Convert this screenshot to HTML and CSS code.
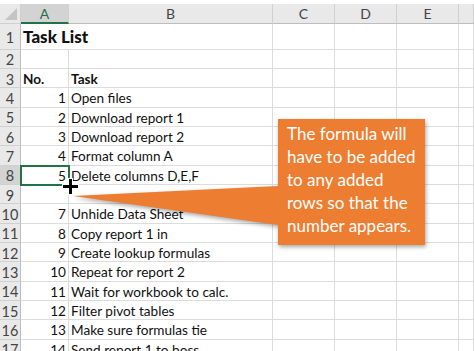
FILE: index.html
```html
<!DOCTYPE html>
<html lang="en">
<head>
    <meta charset="UTF-8">
    <title>Task List</title>
    <link rel="stylesheet" href="styles.css">
</head>
<body>
    <div class="sheet">
        <div class="grid">
            <!-- column headers -->
            <div class="hdr corner"><span class="corner-tri"></span></div>
            <div class="hdr col active">A</div>
            <div class="hdr col">B</div>
            <div class="hdr col">C</div>
            <div class="hdr col">D</div>
            <div class="hdr col">E</div>
            <div class="hdr col"></div>

            <div class="hdr row tall">1</div>
            <div class="cell tall title">Task List</div>
            <div class="cell tall"></div><div class="cell tall"></div><div class="cell tall"></div><div class="cell tall"></div><div class="cell tall"></div>

            <div class="hdr row">2</div>
            <div class="cell"></div><div class="cell"></div><div class="cell"></div><div class="cell"></div><div class="cell"></div><div class="cell"></div>

            <div class="hdr row">3</div>
            <div class="cell bold">No.</div><div class="cell bold">Task</div><div class="cell"></div><div class="cell"></div><div class="cell"></div><div class="cell"></div>

            <div class="hdr row">4</div>
            <div class="cell num">1</div><div class="cell">Open files</div><div class="cell"></div><div class="cell"></div><div class="cell"></div><div class="cell"></div>

            <div class="hdr row">5</div>
            <div class="cell num">2</div><div class="cell">Download report 1</div><div class="cell"></div><div class="cell"></div><div class="cell"></div><div class="cell"></div>

            <div class="hdr row">6</div>
            <div class="cell num">3</div><div class="cell">Download report 2</div><div class="cell"></div><div class="cell"></div><div class="cell"></div><div class="cell"></div>

            <div class="hdr row">7</div>
            <div class="cell num">4</div><div class="cell">Format column A</div><div class="cell"></div><div class="cell"></div><div class="cell"></div><div class="cell"></div>

            <div class="hdr row active">8</div>
            <div class="cell num selected">5</div><div class="cell">Delete columns D,E,F</div><div class="cell"></div><div class="cell"></div><div class="cell"></div><div class="cell"></div>

            <div class="hdr row">9</div>
            <div class="cell"></div><div class="cell"></div><div class="cell"></div><div class="cell"></div><div class="cell"></div><div class="cell"></div>

            <div class="hdr row">10</div>
            <div class="cell num">7</div><div class="cell">Unhide Data Sheet</div><div class="cell"></div><div class="cell"></div><div class="cell"></div><div class="cell"></div>

            <div class="hdr row">11</div>
            <div class="cell num">8</div><div class="cell">Copy report 1 in</div><div class="cell"></div><div class="cell"></div><div class="cell"></div><div class="cell"></div>

            <div class="hdr row">12</div>
            <div class="cell num">9</div><div class="cell">Create lookup formulas</div><div class="cell"></div><div class="cell"></div><div class="cell"></div><div class="cell"></div>

            <div class="hdr row">13</div>
            <div class="cell num">10</div><div class="cell">Repeat for report 2</div><div class="cell"></div><div class="cell"></div><div class="cell"></div><div class="cell"></div>

            <div class="hdr row">14</div>
            <div class="cell num">11</div><div class="cell">Wait for workbook to calc.</div><div class="cell"></div><div class="cell"></div><div class="cell"></div><div class="cell"></div>

            <div class="hdr row">15</div>
            <div class="cell num">12</div><div class="cell">Filter pivot tables</div><div class="cell"></div><div class="cell"></div><div class="cell"></div><div class="cell"></div>

            <div class="hdr row">16</div>
            <div class="cell num">13</div><div class="cell">Make sure formulas tie</div><div class="cell"></div><div class="cell"></div><div class="cell"></div><div class="cell"></div>

            <div class="hdr row">17</div>
            <div class="cell num">14</div><div class="cell">Send report 1 to boss</div><div class="cell"></div><div class="cell"></div><div class="cell"></div><div class="cell"></div>
        </div>

        <!-- fill cursor over the selected cell -->
        <svg class="cursor" width="17" height="17" viewBox="0 0 17 17">
            <path d="M6 0h5v6h6v5h-6v6h-5v-6h-6v-5h6z" fill="#fff"/>
            <path d="M7 1h3v6h6v3h-6v6h-3v-6h-6v-3h6z" fill="#000"/>
        </svg>

        <!-- callout shape -->
        <div class="callout">
            <svg class="callout-shape" width="474" height="351" viewBox="0 0 474 351">
                <path d="M278 119 H425 V245 H278 V225 L73 196 L278 186 Z" fill="#ed7d31"/>
            </svg>
            <div class="callout-text">The formula will have to be added to any added rows so that the number appears.</div>
        </div>
    </div>
</body>
</html>
```

FILE: styles.css
```css
body {
    margin: 0;
    padding: 0;
    background: #fff;
    font-family: Lato, 'Liberation Sans', sans-serif;
    overflow: hidden;
}

.sheet {
    position: relative;
    width: 474px;
    height: 351px;
    overflow: hidden;
    padding-top: 4px;
    box-sizing: border-box;
}

.grid {
    display: grid;
    grid-template-columns: 21px 48px 204px 62px 62px 62px 15px;
    grid-template-rows: 20px 25.67px;
    grid-auto-rows: 19.33px;
}

.hdr {
    background: #e9e9e9;
    color: #444;
    font-size: 14px;
    display: flex;
    align-items: center;
    justify-content: center;
    box-sizing: border-box;
    border-right: 1px solid #d0d0d0;
    border-bottom: 1px solid #d0d0d0;
}

.hdr.col {
    border-bottom: 1px solid #bdbdbd;
}

.hdr.row {
    border-right: 1px solid #bdbdbd;
    padding-top: 2px;
    font-size: 14.5px;
}

.hdr.active {
    background: #d3d3d3;
    color: #2a6e48;
}

.hdr.col.active {
    border-bottom: 2px solid #217346;
}

.hdr.row.active {
    color: #444;
}

.corner {
    position: relative;
}

.corner-tri {
    position: absolute;
    right: 3px;
    bottom: 3px;
    width: 0;
    height: 0;
    border-left: 12px solid transparent;
    border-bottom: 12px solid #c4c4c4;
}

.cell {
    box-sizing: border-box;
    border-right: 1px solid #dcdcdc;
    border-bottom: 1px solid #dcdcdc;
    font-size: 13.6px;
    color: #111;
    padding: 2px 2px 0;
    white-space: nowrap;
    overflow: visible;
    display: flex;
    align-items: center;
}

.cell.tall {
    align-items: flex-end;
    padding-bottom: 2px;
}

.cell.title {
    font-size: 17px;
    font-weight: 900;
    position: relative;
    z-index: 1;
    border-right: none;
}

.cell.bold {
    font-weight: 700;
}

.cell.num {
    justify-content: flex-end;
}

.cell.selected {
    outline: 2px solid #217346;
    outline-offset: -1px;
    position: relative;
    z-index: 2;
}

.cursor {
    position: absolute;
    left: 62px;
    top: 178px;
    z-index: 5;
}

.callout {
    position: absolute;
    top: 0;
    left: 0;
    width: 474px;
    height: 351px;
    z-index: 4;
    pointer-events: none;
}

.callout-shape {
    position: absolute;
    top: 0;
    left: 0;
    filter: drop-shadow(1px 2px 2px rgba(0, 0, 0, 0.35));
}

.callout-text {
    position: absolute;
    left: 287px;
    top: 122px;
    width: 134px;
    color: #fff;
    font-size: 17px;
    line-height: 23px;
}
```
